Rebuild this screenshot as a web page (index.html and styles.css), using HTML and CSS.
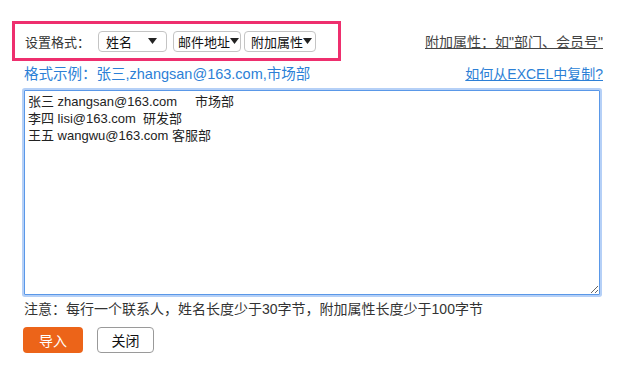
FILE: index.html
```html
<!DOCTYPE html>
<html lang="zh-CN">
<head>
    <meta charset="UTF-8">
    <title>导入联系人</title>
    <link rel="stylesheet" href="styles.css">
</head>
<body>

<div class="import-panel">
    <div class="top-row">
        <div class="format-box">
            <span class="format-label">设置格式：</span>
            <div class="fake-select select-name">
                <span>姓名</span>
                <svg class="caret" width="9" height="6" viewBox="0 0 9 6"><path d="M0 0h9L4.5 6z"/></svg>
            </div>
            <div class="fake-select select-email">
                <span>邮件地址</span>
                <svg class="caret" width="9" height="6" viewBox="0 0 9 6"><path d="M0 0h9L4.5 6z"/></svg>
            </div>
            <div class="fake-select select-extra">
                <span>附加属性</span>
                <svg class="caret" width="9" height="6" viewBox="0 0 9 6"><path d="M0 0h9L4.5 6z"/></svg>
            </div>
        </div>
        <span class="hint">附加属性：如"部门、会员号"</span>
    </div>

    <div class="example-row">
        <span class="example">格式示例：张三,zhangsan@163.com,市场部</span>
        <a href="#" class="help-link">如何从EXCEL中复制?</a>
    </div>

    <textarea class="contacts" spellcheck="false">张三 zhangsan@163.com     市场部
李四 lisi@163.com  研发部
王五 wangwu@163.com 客服部</textarea>

    <p class="note">注意：每行一个联系人，姓名长度少于30字节，附加属性长度少于100字节</p>

    <div class="actions">
        <button class="btn btn-primary">导入</button>
        <button class="btn btn-default">关闭</button>
    </div>
</div>

</body>
</html>
```

FILE: styles.css
```css
* {
    margin: 0;
    padding: 0;
    box-sizing: border-box;
}

body {
    font-family: "Liberation Sans", "Noto Sans CJK SC", sans-serif;
    background-color: #fff;
    color: #333;
}

.import-panel {
    width: 603px;
    padding: 21px 0 0 24px;
}

.top-row {
    display: flex;
    justify-content: space-between;
    align-items: center;
}

.format-box {
    display: flex;
    align-items: center;
    width: 329px;
    height: 40px;
    margin-left: -12px;
    padding-left: 10px;
    border: 3px solid #ee2f6e;
}

.format-label {
    width: 73px;
    font-size: 13px;
    color: #333;
    white-space: nowrap;
}

.fake-select {
    display: flex;
    align-items: center;
    justify-content: space-between;
    flex-shrink: 0;
    height: 21px;
    padding: 0 2px 0 4px;
    border: 1px solid #c4c4c4;
    border-radius: 4px;
    font-size: 13px;
    color: #111;
    background-color: #fff;
    white-space: nowrap;
}

.select-name {
    width: 69px;
    padding-left: 7px;
    padding-right: 9px;
}

.select-email {
    width: 68px;
    margin-left: 6px;
}

.select-extra {
    width: 72px;
    margin-left: 3px;
    padding-left: 6px;
    padding-right: 3px;
}

.fake-select .caret {
    flex-shrink: 0;
    fill: #222;
}

.hint {
    font-size: 14px;
    color: #444;
    text-decoration: underline;
}

.example-row {
    display: flex;
    justify-content: space-between;
    align-items: center;
    height: 21px;
    margin-top: 1px;
    font-size: 14px;
}

.example {
    color: #2c7fd6;
    font-size: 14.5px;
}

.help-link {
    color: #2c7fd6;
    text-decoration: underline;
}

.contacts {
    display: block;
    width: 576px;
    height: 205px;
    margin-top: 7px;
    padding: 2px 3px;
    border: 1px solid #5a98e8;
    border-radius: 1px;
    box-shadow: 0 0 0 2px rgba(120, 170, 240, 0.55);
    outline: none;
    resize: both;
    font-family: "Liberation Sans", "Noto Sans CJK SC", sans-serif;
    font-size: 13px;
    line-height: 17px;
    color: #222;
}

.note {
    margin-top: 4px;
    font-size: 14px;
    line-height: 20px;
    color: #333;
}

.actions {
    display: flex;
    gap: 14px;
    margin-top: 8px;
    margin-left: -1px;
}

.btn {
    height: 26px;
    font-family: "Liberation Sans", "Noto Sans CJK SC", sans-serif;
    font-size: 14px;
    border-radius: 4px;
    cursor: pointer;
}

.btn-primary {
    width: 60px;
    color: #fff;
    background-color: #ec6419;
    border: none;
}

.btn-default {
    width: 57px;
    color: #111;
    background-color: #fff;
    border: 1px solid #9a9a9a;
}
```
